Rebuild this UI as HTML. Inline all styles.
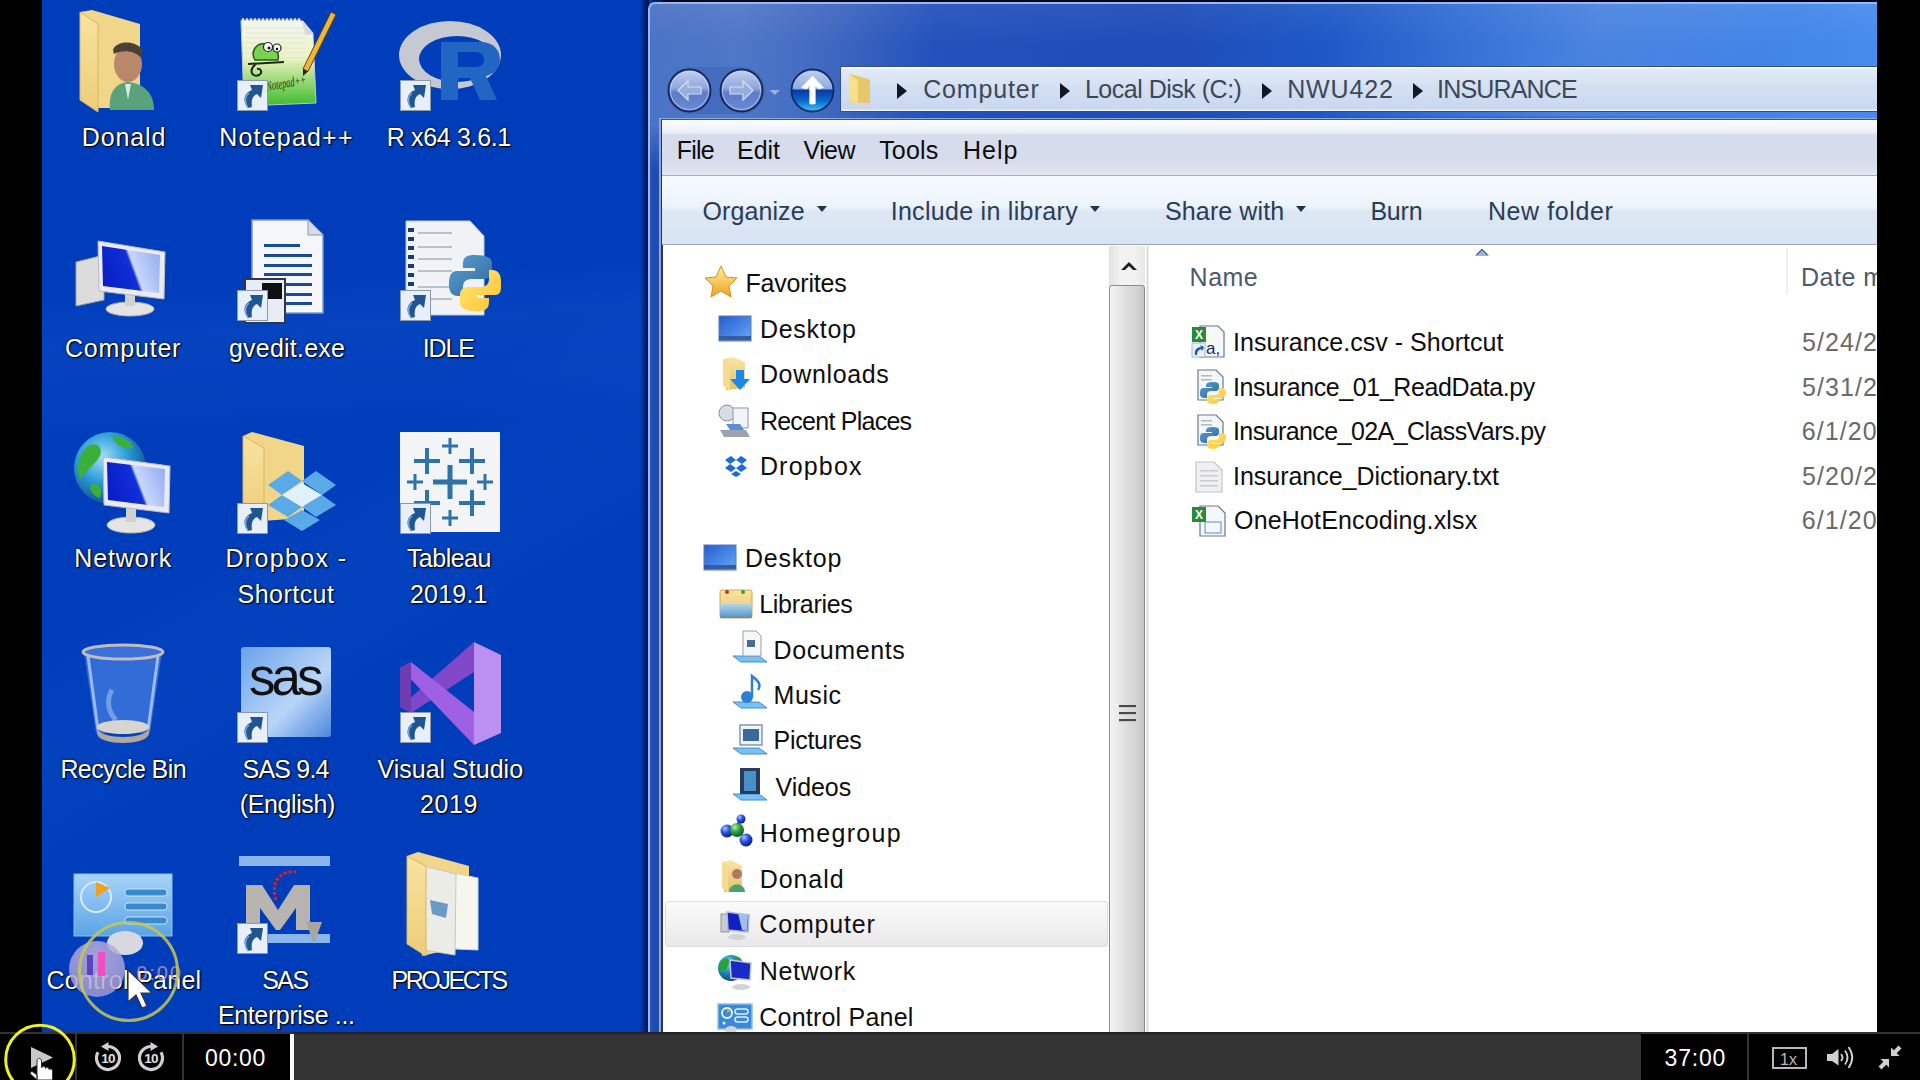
<!DOCTYPE html>
<html><head><meta charset="utf-8"><title>Explorer</title>
<style>
*{margin:0;padding:0;box-sizing:border-box}
html,body{width:1920px;height:1080px;overflow:hidden;background:#000}
body{position:relative;font-family:"Liberation Sans",sans-serif}
.a{position:absolute}
.t{position:absolute;line-height:0;white-space:nowrap}
.dl{color:#fff;text-shadow:1px 1px 1px #000,0 0 3px rgba(0,0,20,.9)}
</style></head><body>
<div class="a" style="left:42px;top:0;width:620px;height:1032px;background:#003dba;background-image:linear-gradient(176deg,rgba(80,140,255,0) 27%,rgba(80,140,255,.07) 32%,rgba(80,140,255,.05) 38%,rgba(80,140,255,0) 42%),linear-gradient(150deg,rgba(80,140,255,0) 45%,rgba(80,140,255,.06) 55%,rgba(80,140,255,0) 65%)"></div>
<svg class="a" style="left:0;top:0" width="1920" height="1080" viewBox="0 0 1920 1080">
<defs>
<linearGradient id="fold" x1="0" y1="0" x2="1" y2="1"><stop offset="0" stop-color="#fbe7a6"/><stop offset="1" stop-color="#e5c06a"/></linearGradient>
<linearGradient id="foldf" x1="0" y1="0" x2="0" y2="1"><stop offset="0" stop-color="#f8e3a0"/><stop offset="1" stop-color="#edcd7a"/></linearGradient>
<linearGradient id="scr" x1="0" y1=".3" x2="1" y2="0"><stop offset="0" stop-color="#0a20c8"/><stop offset=".42" stop-color="#1030d8"/><stop offset=".47" stop-color="#c8d8fc"/><stop offset="1" stop-color="#90a8f0"/></linearGradient>
<linearGradient id="sasg" x1="0" y1="0" x2="1" y2="1"><stop offset="0" stop-color="#6aa2ea"/><stop offset=".6" stop-color="#b9d6f8"/><stop offset="1" stop-color="#4c86de"/></linearGradient>
<linearGradient id="cpg" x1="0" y1="0" x2="0" y2="1"><stop offset="0" stop-color="#a8d4f8"/><stop offset="1" stop-color="#5aa4e6"/></linearGradient>
<radialGradient id="globe" cx=".4" cy=".35" r=".7"><stop offset="0" stop-color="#9fe0f8"/><stop offset=".5" stop-color="#2a9ad8"/><stop offset="1" stop-color="#0a4a8a"/></radialGradient>
<linearGradient id="bin" x1="0" y1="0" x2="1" y2="0"><stop offset="0" stop-color="#3a78d8"/><stop offset=".5" stop-color="#9cc4f4"/><stop offset="1" stop-color="#3a6ad0"/></linearGradient>
<linearGradient id="vsg" x1="0" y1="0" x2="1" y2="0"><stop offset="0" stop-color="#8a4ec8"/><stop offset="1" stop-color="#c39af0"/></linearGradient>
<linearGradient id="npg" x1="0" y1="0" x2="0" y2="1"><stop offset="0" stop-color="#f4f8f0"/><stop offset=".45" stop-color="#eef4c0"/><stop offset="1" stop-color="#3cbc2a"/></linearGradient>
<linearGradient id="pyb" x1="0" y1="0" x2="1" y2="1"><stop offset="0" stop-color="#5a9fd4"/><stop offset="1" stop-color="#306998"/></linearGradient>
<linearGradient id="pyy" x1="0" y1="0" x2="1" y2="1"><stop offset="0" stop-color="#ffe873"/><stop offset="1" stop-color="#ffc331"/></linearGradient>
</defs>
<path d="M80 12 L92 10 L140 24 L140 108 L96 108 Z" fill="#f1d68a"/>
<path d="M80 12 L98 24 L98 112 L80 100 Z" fill="url(#foldf)" stroke="#d8b560" stroke-width="1"/>
<path d="M110 110 C108 92 116 83 128 82 C140 83 154 90 154 110 Z" fill="#5aa27c"/>
<ellipse cx="128" cy="64" rx="14" ry="18" fill="#b9886a"/>
<path d="M113 50 C116 40 136 40 143 50 L141 58 C134 50 122 50 114 54 Z" fill="#4a4036"/>
<path d="M125 84 L128 100 L131 84 Z" fill="#d8e8e8"/>
<path d="M241 21 L243 18 L245 21 L247 18 L249 21 L251 18 L253 21 L255 18 L257 21 L259 18 L261 21 L263 18 L265 21 L267 18 L269 21 L271 18 L273 21 L275 18 L277 21 L279 18 L281 21 L283 18 L285 21 L287 18 L289 21 L291 18 L293 21 L295 18 L297 21 L299 18 L301 21 L303 21 L313 33 L316 103 L244 106 Z" fill="url(#npg)" stroke="#b8c8d8" stroke-width="1"/>
<path d="M302 21 L305 35 L313 34 Z" fill="#d8d8e0"/>
<path d="M245 28 L306 28" stroke="#dde4ec" stroke-width="1"/>
<path d="M245 33 L306 33" stroke="#dde4ec" stroke-width="1"/>
<path d="M245 38 L306 38" stroke="#dde4ec" stroke-width="1"/>
<path d="M245 43 L306 43" stroke="#dde4ec" stroke-width="1"/>
<path d="M245 48 L306 48" stroke="#dde4ec" stroke-width="1"/>
<path d="M245 53 L306 53" stroke="#dde4ec" stroke-width="1"/>
<path d="M245 58 L306 58" stroke="#dde4ec" stroke-width="1"/>
<path d="M303 69 L331 12 L336 14.5 L308 71.5 Z" fill="#f0b830" stroke="#604010" stroke-width="1"/>
<path d="M303 69 L308 71.5 L303 76 Z" fill="#302010"/>
<path d="M255 60 C250 52 256 42 266 44 C274 45 280 52 278 60 Z" fill="#7ad050" stroke="#2a5a1a" stroke-width="1.5"/>
<circle cx="268" cy="47" r="4.5" fill="#fff" stroke="#222" stroke-width="1.2"/><circle cx="277" cy="48" r="4" fill="#fff" stroke="#222" stroke-width="1.2"/><circle cx="269" cy="48" r="1.5" fill="#111"/><circle cx="277" cy="49" r="1.3" fill="#111"/>
<path d="M248 64 L284 62 M256 64 C248 70 252 78 259 75 C263 73 261 68 257 69" stroke="#1a2a10" stroke-width="2" fill="none"/>
<text x="267" y="91" font-family="Liberation Serif" font-style="italic" font-size="14" fill="#1a3a10" transform="rotate(-10 267 91)" textLength="40" lengthAdjust="spacingAndGlyphs">Notepad++</text>
<g transform="translate(237,80)"><rect x="0.5" y="0.5" width="30" height="30" fill="#e9eff8" stroke="#8a98b0" stroke-width="1"/><path d="M11 28 C5 21 7 13 15 10 L13 5 L26 5 L24 18 L20 14 C15 16 14 21 15 27 Z" fill="#1e5592"/><path d="M11 28 C7 22 8 16 12 13" stroke="#7aa8dc" stroke-width="1.5" fill="none"/></g>
<path fill-rule="evenodd" d="M399 55 A51 34 0 1 0 501 55 A51 34 0 1 0 399 55 Z M419 59 A38 23 0 1 1 495 59 A38 23 0 1 1 419 59 Z" fill="#c6c8d2"/>
<path fill-rule="evenodd" d="M441 42 L480 42 C494 42 500 50 500 60 C500 68 494 74 486 76 L497 100 L480 100 L470 78 L458 78 L458 100 L441 100 Z M458 52 L475 52 C482 52 484 56 484 60 C484 64 481 67 475 67 L458 67 Z" fill="#2266c4"/>
<g transform="translate(400,80)"><rect x="0.5" y="0.5" width="30" height="30" fill="#e9eff8" stroke="#8a98b0" stroke-width="1"/><path d="M11 28 C5 21 7 13 15 10 L13 5 L26 5 L24 18 L20 14 C15 16 14 21 15 27 Z" fill="#1e5592"/><path d="M11 28 C7 22 8 16 12 13" stroke="#7aa8dc" stroke-width="1.5" fill="none"/></g>
<path d="M76 262 L104 255 L104 300 L76 306 Z" fill="#dcdcdc" stroke="#a0a0a0" stroke-width="1"/>
<ellipse cx="130" cy="309" rx="24" ry="7" fill="#e4e4e4" stroke="#b0b0b0" stroke-width="1"/>
<rect x="125" y="292" width="10" height="14" fill="#d0d0d0"/>
<path d="M98 241 L165 252 L164 299 L99 291 Z" fill="#eaeaf0" stroke="#b8b8c8" stroke-width="1"/>
<path d="M102 246 L160 255 L159 293 L103 286 Z" fill="url(#scr)"/>
<path d="M252 220 L308 220 L323 235 L323 313 L252 313 Z" fill="#f4f6fa" stroke="#8898b0" stroke-width="1.5"/>
<path d="M308 220 L308 235 L323 235" fill="#d8dce8" stroke="#8898b0" stroke-width="1"/>
<rect x="264" y="244" width="36" height="3" fill="#1a4a9a"/>
<rect x="264" y="254" width="48" height="3" fill="#1a4a9a"/>
<rect x="264" y="264" width="48" height="3" fill="#1a4a9a"/>
<rect x="264" y="273" width="48" height="3" fill="#1a4a9a"/>
<rect x="264" y="283" width="48" height="3" fill="#1a4a9a"/>
<rect x="264" y="293" width="48" height="3" fill="#1a4a9a"/>
<rect x="264" y="302" width="48" height="3" fill="#1a4a9a"/>
<rect x="245" y="279" width="40" height="44" fill="#e8ecf4" stroke="#303848" stroke-width="2"/>
<rect x="262" y="283" width="20" height="16" fill="#101010"/>
<g transform="translate(237,290)"><rect x="0.5" y="0.5" width="30" height="30" fill="#e9eff8" stroke="#8a98b0" stroke-width="1"/><path d="M11 28 C5 21 7 13 15 10 L13 5 L26 5 L24 18 L20 14 C15 16 14 21 15 27 Z" fill="#1e5592"/><path d="M11 28 C7 22 8 16 12 13" stroke="#7aa8dc" stroke-width="1.5" fill="none"/></g>
<path d="M406 221 L470 221 L484 236 L484 315 L406 315 Z" fill="#f0f2f6" stroke="#c0c8d0" stroke-width="1"/>
<rect x="408" y="228" width="6" height="4" fill="#1a3a6a"/>
<rect x="408" y="237" width="6" height="4" fill="#1a3a6a"/>
<rect x="408" y="246" width="6" height="4" fill="#1a3a6a"/>
<rect x="408" y="255" width="6" height="4" fill="#1a3a6a"/>
<rect x="408" y="264" width="6" height="4" fill="#1a3a6a"/>
<rect x="408" y="273" width="6" height="4" fill="#1a3a6a"/>
<rect x="408" y="282" width="6" height="4" fill="#1a3a6a"/>
<rect x="408" y="291" width="6" height="4" fill="#1a3a6a"/>
<rect x="408" y="300" width="6" height="4" fill="#1a3a6a"/>
<rect x="408" y="309" width="6" height="4" fill="#1a3a6a"/>
<rect x="418" y="232" width="34" height="2" fill="#b8c0c8"/>
<rect x="418" y="246" width="34" height="2" fill="#b8c0c8"/>
<rect x="418" y="258" width="34" height="2" fill="#b8c0c8"/>
<rect x="418" y="270" width="34" height="2" fill="#b8c0c8"/>
<rect x="418" y="286" width="34" height="2" fill="#b8c0c8"/>
<rect x="418" y="298" width="34" height="2" fill="#b8c0c8"/>
<path d="M475 255 C462 255 463 261 463 268 L475 268 L475 271 L457 271 C450 271 449 278 449 284 C449 291 451 296 458 296 L463 296 L463 287 C463 281 467 279 472 279 L484 279 C489 279 492 276 492 271 L492 263 C492 258 487 255 475 255 Z" fill="url(#pyb)"/>
<path d="M477 311 C490 311 489 305 489 298 L477 298 L477 295 L495 295 C502 295 501 288 501 282 C501 275 499 270 492 270 L489 270 L489 279 C489 285 485 287 480 287 L468 287 C463 287 460 290 460 295 L460 303 C460 308 465 311 477 311 Z" fill="url(#pyy)"/>
<g transform="translate(400,290)"><rect x="0.5" y="0.5" width="30" height="30" fill="#e9eff8" stroke="#8a98b0" stroke-width="1"/><path d="M11 28 C5 21 7 13 15 10 L13 5 L26 5 L24 18 L20 14 C15 16 14 21 15 27 Z" fill="#1e5592"/><path d="M11 28 C7 22 8 16 12 13" stroke="#7aa8dc" stroke-width="1.5" fill="none"/></g>
<circle cx="110" cy="468" r="36" fill="url(#globe)"/>
<path d="M84 450 C92 440 104 444 100 456 C94 466 86 470 80 480 C76 470 78 458 84 450 Z M112 436 C122 436 130 440 134 448 C124 450 116 446 112 436 Z M90 486 C98 480 104 488 100 498 C94 496 90 492 90 486 Z" fill="#3cae3c"/>
<ellipse cx="131" cy="525" rx="24" ry="8" fill="#e4e4e4" stroke="#b0b0b0" stroke-width="1"/>
<rect x="126" y="508" width="10" height="14" fill="#d0d0d0"/>
<path d="M103 457 L170 466 L169 513 L104 505 Z" fill="#eaeaf0" stroke="#b8b8c8" stroke-width="1"/>
<path d="M107 462 L165 469 L164 507 L108 500 Z" fill="url(#scr)"/>
<path d="M243 436 L252 432 L304 446 L304 518 L262 521 Z" fill="#f1d68a"/>
<path d="M243 436 L264 448 L264 521 L243 508 Z" fill="url(#foldf)" stroke="#d8b560" stroke-width="1"/>
<path d="M268 485 L288 471 L302 481 L282 495 Z M302 481 L316 471 L336 485 L322 495 Z M268 505 L282 495 L302 507 L288 517 Z M322 495 L336 505 L316 517 L302 507 Z M284 520 L302 510 L320 520 L302 531 Z" fill="#5aaae8"/>
<path d="M282 495 L302 483 L322 495 L302 507 Z" fill="#e0f0fc"/>
<g transform="translate(237,503)"><rect x="0.5" y="0.5" width="30" height="30" fill="#e9eff8" stroke="#8a98b0" stroke-width="1"/><path d="M11 28 C5 21 7 13 15 10 L13 5 L26 5 L24 18 L20 14 C15 16 14 21 15 27 Z" fill="#1e5592"/><path d="M11 28 C7 22 8 16 12 13" stroke="#7aa8dc" stroke-width="1.5" fill="none"/></g>
<rect x="400" y="432" width="100" height="100" fill="#f2f4f6"/>
<rect x="433" y="479.5" width="34" height="5" fill="#2e72aa"/><rect x="447.5" y="465" width="5" height="34" fill="#2e72aa"/>
<rect x="414" y="459.0" width="26" height="4" fill="#2e72aa"/><rect x="425.0" y="448" width="4" height="26" fill="#2e72aa"/>
<rect x="459" y="459.0" width="26" height="4" fill="#2e72aa"/><rect x="470.0" y="448" width="4" height="26" fill="#2e72aa"/>
<rect x="414" y="501.0" width="26" height="4" fill="#2e72aa"/><rect x="425.0" y="490" width="4" height="26" fill="#2e72aa"/>
<rect x="459" y="501.0" width="26" height="4" fill="#2e72aa"/><rect x="470.0" y="490" width="4" height="26" fill="#2e72aa"/>
<rect x="442" y="444.5" width="16" height="3" fill="#2e72aa"/><rect x="448.5" y="438" width="3" height="16" fill="#2e72aa"/>
<rect x="442" y="516.5" width="16" height="3" fill="#2e72aa"/><rect x="448.5" y="510" width="3" height="16" fill="#2e72aa"/>
<rect x="407" y="480.5" width="16" height="3" fill="#2e72aa"/><rect x="413.5" y="474" width="3" height="16" fill="#2e72aa"/>
<rect x="477" y="480.5" width="16" height="3" fill="#2e72aa"/><rect x="483.5" y="474" width="3" height="16" fill="#2e72aa"/>
<g transform="translate(400,503)"><rect x="0.5" y="0.5" width="30" height="30" fill="#e9eff8" stroke="#8a98b0" stroke-width="1"/><path d="M11 28 C5 21 7 13 15 10 L13 5 L26 5 L24 18 L20 14 C15 16 14 21 15 27 Z" fill="#1e5592"/><path d="M11 28 C7 22 8 16 12 13" stroke="#7aa8dc" stroke-width="1.5" fill="none"/></g>
<path d="M84 652 L162 652 L150 733 L96 733 Z" fill="#5a90ec" opacity=".55"/>
<path d="M88 656 L98 730 M158 656 L148 730" stroke="#c8dcfc" stroke-width="3" opacity=".7"/>
<path d="M112 690 C106 700 108 712 116 720" stroke="#9cc0f4" stroke-width="5" fill="none" opacity=".6"/>
<ellipse cx="123" cy="652" rx="40" ry="7" fill="#3a70d8" stroke="#c0bcc0" stroke-width="3"/>
<ellipse cx="123" cy="727" rx="26" ry="7" fill="#d8d4d0"/>
<path d="M97 728 C100 740 146 740 149 728 L149 734 C146 746 100 746 97 734 Z" fill="#b0a8a0"/>
<rect x="241" y="647" width="90" height="90" rx="3" fill="url(#sasg)"/>
<text x="249" y="695" font-family="Liberation Sans" font-size="53" fill="#111" letter-spacing="-4">sas</text>
<g transform="translate(237,712)"><rect x="0.5" y="0.5" width="30" height="30" fill="#e9eff8" stroke="#8a98b0" stroke-width="1"/><path d="M11 28 C5 21 7 13 15 10 L13 5 L26 5 L24 18 L20 14 C15 16 14 21 15 27 Z" fill="#1e5592"/><path d="M11 28 C7 22 8 16 12 13" stroke="#7aa8dc" stroke-width="1.5" fill="none"/></g>
<path d="M400 707 L474 642 L474 672 L411 713 Z" fill="#8048c8"/>
<path d="M400 668 L411 662 L474 712 L474 745 Z" fill="#a060e4"/>
<path d="M400 668 L411 662 L411 713 L400 707 Z" fill="#6c3cb0"/>
<path d="M474 642 L501 655 L501 733 L474 745 Z" fill="#bc90f2"/>
<g transform="translate(400,712)"><rect x="0.5" y="0.5" width="30" height="30" fill="#e9eff8" stroke="#8a98b0" stroke-width="1"/><path d="M11 28 C5 21 7 13 15 10 L13 5 L26 5 L24 18 L20 14 C15 16 14 21 15 27 Z" fill="#1e5592"/><path d="M11 28 C7 22 8 16 12 13" stroke="#7aa8dc" stroke-width="1.5" fill="none"/></g>
<rect x="74" y="874" width="98" height="62" fill="url(#cpg)" stroke="#8ec0ee" stroke-width="1"/>
<circle cx="96" cy="897" r="15" fill="none" stroke="#d8ecfc" stroke-width="2"/>
<path d="M96 882 L110 888 L96 897 Z" fill="#f0a020"/>
<rect x="125" y="889" width="42" height="7" rx="3" fill="#3a8ad0" stroke="#c8e4fc" stroke-width="1"/>
<rect x="125" y="903" width="42" height="7" rx="3" fill="#3a8ad0" stroke="#c8e4fc" stroke-width="1"/>
<rect x="125" y="917" width="42" height="7" rx="3" fill="#3a8ad0" stroke="#c8e4fc" stroke-width="1"/>
<ellipse cx="125" cy="943" rx="18" ry="12" fill="#d8d8e0"/>
<rect x="239" y="856" width="91" height="10" fill="#8ab6ec"/>
<path d="M246 885 L262 885 L278 910 L294 885 L310 885 L310 930 L296 930 L296 908 L280 930 L276 930 L260 908 L260 930 L246 930 Z" fill="#b8b4b0"/>
<path d="M276 900 C270 880 282 870 296 872" fill="none" stroke="#e02020" stroke-width="3" stroke-dasharray="3 2"/>
<rect x="268" y="934" width="62" height="9" fill="#8ab6ec"/>
<path d="M306 922 L322 922 L314 944 Z" fill="#a8a4a0"/>
<g transform="translate(237,923)"><rect x="0.5" y="0.5" width="30" height="30" fill="#e9eff8" stroke="#8a98b0" stroke-width="1"/><path d="M11 28 C5 21 7 13 15 10 L13 5 L26 5 L24 18 L20 14 C15 16 14 21 15 27 Z" fill="#1e5592"/><path d="M11 28 C7 22 8 16 12 13" stroke="#7aa8dc" stroke-width="1.5" fill="none"/></g>
<path d="M407 856 L418 852 L469 866 L469 945 L422 956 Z" fill="#f1d68a"/>
<path d="M429 868 L478 878 L478 950 L432 948 Z" fill="#f6f6f0" stroke="#d0d0c8" stroke-width="1"/>
<path d="M424 866 L456 874 L455 955 L424 950 Z" fill="#ecece6" stroke="#c8c8c0" stroke-width="1"/>
<path d="M430 900 L448 904 L446 918 L432 914 Z" fill="#6a9ac8"/>
<path d="M407 856 L426 866 L426 956 L407 944 Z" fill="url(#foldf)" stroke="#d8b560" stroke-width="1"/>
</svg>
<div class="t dl" style="left:81.7px;top:136.8px;font-size:25px;letter-spacing:0.89px;color:#fff;">Donald</div>
<div class="t dl" style="left:219.2px;top:136.8px;font-size:25px;letter-spacing:1.20px;color:#fff;">Notepad++</div>
<div class="t dl" style="left:386.7px;top:136.8px;font-size:25px;letter-spacing:-0.33px;color:#fff;">R x64 3.6.1</div>
<div class="t dl" style="left:65.0px;top:347.6px;font-size:25px;letter-spacing:0.81px;color:#fff;">Computer</div>
<div class="t dl" style="left:229.0px;top:347.6px;font-size:25px;letter-spacing:0.22px;color:#fff;">gvedit.exe</div>
<div class="t dl" style="left:422.7px;top:347.6px;font-size:25px;letter-spacing:-1.15px;color:#fff;">IDLE</div>
<div class="t dl" style="left:74.2px;top:557.6px;font-size:25px;letter-spacing:0.89px;color:#fff;">Network</div>
<div class="t dl" style="left:225.4px;top:557.6px;font-size:25px;letter-spacing:1.36px;color:#fff;">Dropbox -</div>
<div class="t dl" style="left:237.6px;top:593.8px;font-size:25px;letter-spacing:0.46px;color:#fff;">Shortcut</div>
<div class="t dl" style="left:406.9px;top:557.6px;font-size:25px;letter-spacing:-0.52px;color:#fff;">Tableau</div>
<div class="t dl" style="left:410.0px;top:593.8px;font-size:25px;letter-spacing:0.20px;color:#fff;">2019.1</div>
<div class="t dl" style="left:60.4px;top:768.8px;font-size:25px;letter-spacing:-0.58px;color:#fff;">Recycle Bin</div>
<div class="t dl" style="left:242.6px;top:768.8px;font-size:25px;letter-spacing:-0.81px;color:#fff;">SAS 9.4</div>
<div class="t dl" style="left:239.7px;top:803.8px;font-size:25px;letter-spacing:-0.38px;color:#fff;">(English)</div>
<div class="t dl" style="left:377.4px;top:768.8px;font-size:25px;letter-spacing:0.02px;color:#fff;">Visual Studio</div>
<div class="t dl" style="left:420.0px;top:803.8px;font-size:25px;letter-spacing:0.61px;color:#fff;">2019</div>
<div class="t dl" style="left:46.4px;top:979.5px;font-size:25px;letter-spacing:0.27px;color:#fff;">Control Panel</div>
<div class="t dl" style="left:262.2px;top:979.5px;font-size:25px;letter-spacing:-1.52px;color:#fff;">SAS</div>
<div class="t dl" style="left:217.9px;top:1015.2px;font-size:25px;letter-spacing:-0.36px;color:#fff;">Enterprise ...</div>
<div class="t dl" style="left:391.4px;top:979.5px;font-size:25px;letter-spacing:-2.38px;color:#fff;">PROJECTS</div>
<div class="a" style="left:69px;top:941px;width:56px;height:56px;border-radius:50%;background:radial-gradient(circle at 50% 30%,rgba(190,180,225,.85),rgba(160,150,210,.8))"></div>
<div class="a" style="left:87px;top:955px;width:6px;height:20px;background:#6040c0"></div><div class="a" style="left:98px;top:952px;width:7px;height:24px;background:#f050c0"></div>
<div class="t " style="left:136.2px;top:973.1px;font-size:20px;letter-spacing:1.88px;color:rgba(200,150,190,.8);">0:00</div>
<div class="a" style="left:78px;top:921px;width:101px;height:101px;border-radius:50%;border:3px solid rgba(200,200,80,.85)"></div>
<svg class="a" style="left:124px;top:966px" width="32" height="46" viewBox="0 0 32 46"><path d="M4 4 L4 36 L12 29 L18 42 L23 40 L17 27 L28 27 Z" fill="#fff" stroke="#333" stroke-width="1.2"/></svg>
<div class="a" style="left:640px;top:0;width:9px;height:1032px;background:linear-gradient(90deg,rgba(0,10,60,0),rgba(0,12,60,.5) 50%,rgba(0,12,70,.95))"></div>
<div class="a" style="left:652px;top:0;width:1236px;height:4px;background:linear-gradient(180deg,rgba(0,8,50,.8),rgba(0,10,60,0))"></div>
<div class="a" style="left:648px;top:2px;width:1240px;height:1040px;border:2px solid #9ab8f0;border-radius:7px 7px 0 0;background:linear-gradient(180deg,rgba(255,255,255,.06),rgba(255,255,255,0) 40px),linear-gradient(93deg,#4a72c6 0%,#5078c8 7%,#4068c0 14%,#2452bc 22%,#1e4cb8 40%,#1e58c6 52%,#2a68d2 62%,#3878de 75%,#4286e8 88%,#4a90f0 100%)"></div>
<div class="a" style="left:650px;top:4px;width:1236px;height:112px;background:linear-gradient(110deg,rgba(255,255,255,0) 55%,rgba(255,255,255,.10) 75%,rgba(255,255,255,0) 90%)"></div>
<svg class="a" style="left:660px;top:60px" width="180" height="62" viewBox="660 60 180 62">
<defs>
<linearGradient id="nb" x1="0" y1="0" x2="0" y2="1"><stop offset="0" stop-color="#c4d2f0"/><stop offset=".45" stop-color="#8ea6dc"/><stop offset=".55" stop-color="#5c7cc8"/><stop offset="1" stop-color="#6a8ad4"/></linearGradient>
<linearGradient id="ub" x1="0" y1="0" x2="0" y2="1"><stop offset="0" stop-color="#c0d0f0"/><stop offset=".45" stop-color="#90acdf"/><stop offset=".5" stop-color="#0a3a9e"/><stop offset=".75" stop-color="#0a6ad0"/><stop offset="1" stop-color="#38c8fa"/></linearGradient>
</defs>
<rect x="667" y="67" width="98" height="47" rx="23.5" fill="#1a3a90" opacity=".2"/>
<circle cx="689.5" cy="90.5" r="21" fill="url(#nb)" stroke="#16285a" stroke-width="1.8"/>
<circle cx="689.5" cy="90.5" r="19" fill="none" stroke="#c8d6f4" stroke-width="1" opacity=".7"/>
<circle cx="741.5" cy="90.5" r="21" fill="url(#nb)" stroke="#16285a" stroke-width="1.8"/>
<circle cx="741.5" cy="90.5" r="19" fill="none" stroke="#c8d6f4" stroke-width="1" opacity=".7"/>
<path d="M678 90.5 L688 81 L688 87 L701 87 L701 94 L688 94 L688 100 Z" fill="#9cb0e0" stroke="#dce6f8" stroke-width="1.2" opacity=".9"/>
<path d="M753 90.5 L743 81 L743 87 L730 87 L730 94 L743 94 L743 100 Z" fill="#9cb0e0" stroke="#dce6f8" stroke-width="1.2" opacity=".9"/>
<path d="M769.5 90 L780 90 L774.7 95 Z" fill="#9ab0e0"/>
<circle cx="812.5" cy="90.5" r="21" fill="url(#ub)" stroke="#102a66" stroke-width="1.8"/>
<path d="M812.5 76 L823.5 87.5 L818.5 89 L815.2 85.5 L815.2 104 L809.8 104 L809.8 85.5 L806.5 89 L801.5 87.5 Z" fill="#fff" stroke="#e8f0ff" stroke-width=".8"/>
</svg>
<div class="a" style="left:840px;top:66px;width:1050px;height:46px;border:1px solid #30508a;border-radius:2px;background:linear-gradient(180deg,#e4ecf8 0%,#d4e0f2 45%,#c8d6ee 100%);box-shadow:inset 0 1.5px 0 #fff,inset 0 -1.5px 0 #eef4fc"></div>
<svg class="a" style="left:845px;top:70px" width="30" height="38" viewBox="845 70 30 38"><path d="M849 74 L862 77 L870 80 L870 103 L852 103 Z" fill="#e8c66a"/><path d="M849 74 L858 80 L858 105 L849 100 Z" fill="#f8e08a"/></svg>
<svg class="a" style="left:897px;top:82.7px" width="10" height="16" viewBox="0 0 10 16"><path d="M0 0 L10 8.0 L0 16 Z" fill="#101828"/></svg>
<svg class="a" style="left:1059.5px;top:82.7px" width="10.0" height="16" viewBox="0 0 10.0 16"><path d="M0 0 L10.0 8.0 L0 16 Z" fill="#101828"/></svg>
<svg class="a" style="left:1261.5px;top:82.7px" width="10.0" height="16" viewBox="0 0 10.0 16"><path d="M0 0 L10.0 8.0 L0 16 Z" fill="#101828"/></svg>
<svg class="a" style="left:1413px;top:82.7px" width="10" height="16" viewBox="0 0 10 16"><path d="M0 0 L10 8.0 L0 16 Z" fill="#101828"/></svg>
<div class="t " style="left:923.2px;top:88.9px;font-size:25px;letter-spacing:0.83px;color:#3c4858;">Computer</div>
<div class="t " style="left:1084.9px;top:88.9px;font-size:25px;letter-spacing:-0.49px;color:#3c4858;">Local Disk (C:)</div>
<div class="t " style="left:1287.2px;top:88.9px;font-size:25px;letter-spacing:0.86px;color:#3c4858;">NWU422</div>
<div class="t " style="left:1437.0px;top:88.9px;font-size:25px;letter-spacing:-0.81px;color:#3c4858;">INSURANCE</div>
<div class="a" style="left:650px;top:125px;width:10px;height:920px;background:linear-gradient(180deg,#4a72c6 0,rgba(74,114,198,0) 45px),linear-gradient(90deg,#2c52b4,#1a4cb0 50%,#2a4ea8)"></div>
<div class="a" style="left:659px;top:118px;width:1230px;height:920px;border-left:2px solid #90a4dc;border-top:1px solid #8eaae0"></div>
<div class="a" style="left:661px;top:119px;width:1230px;height:920px;border-left:2px solid #2a3260;border-top:1px solid #3a5488;background:#fff"></div>
<div class="a" style="left:662px;top:120px;width:1230px;height:56px;background:linear-gradient(180deg,#fafcfe 0px,#eef1f8 12px,#d6dcec 15px,#d6dcec 40px,#e2e6f1 55px);border-bottom:1px solid #a8b0c0"></div>
<div class="t " style="left:676.7px;top:150.0px;font-size:25px;letter-spacing:-0.81px;color:#0c0c0c;">File</div>
<div class="t " style="left:737.1px;top:150.0px;font-size:25px;letter-spacing:-0.08px;color:#0c0c0c;">Edit</div>
<div class="t " style="left:803.5px;top:150.0px;font-size:25px;letter-spacing:-0.58px;color:#0c0c0c;">View</div>
<div class="t " style="left:879.2px;top:150.0px;font-size:25px;letter-spacing:0.18px;color:#0c0c0c;">Tools</div>
<div class="t " style="left:962.9px;top:150.0px;font-size:25px;letter-spacing:1.03px;color:#0c0c0c;">Help</div>
<div class="a" style="left:662px;top:176px;width:1230px;height:69px;background:linear-gradient(180deg,#f6fafe 0px,#ecf4fb 30px,#dde7f4 36px,#d9e4f3 68px);border-bottom:1.5px solid #9aa8bc"></div>
<div class="t " style="left:702.6px;top:211.1px;font-size:25px;letter-spacing:0.08px;color:#2a3c56;">Organize</div>
<div class="t " style="left:890.7px;top:211.1px;font-size:25px;letter-spacing:0.29px;color:#2a3c56;">Include in library</div>
<div class="t " style="left:1165.1px;top:211.1px;font-size:25px;letter-spacing:0.10px;color:#2a3c56;">Share with</div>
<div class="t " style="left:1370.4px;top:211.1px;font-size:25px;letter-spacing:-0.21px;color:#2a3c56;">Burn</div>
<div class="t " style="left:1487.9px;top:211.1px;font-size:25px;letter-spacing:0.61px;color:#2a3c56;">New folder</div>
<svg class="a" style="left:817px;top:206px" width="10" height="6" viewBox="0 0 10 6"><path d="M0 0 L10 0 L5.0 6 Z" fill="#1e3452"/></svg>
<svg class="a" style="left:1090px;top:206px" width="10" height="6" viewBox="0 0 10 6"><path d="M0 0 L10 0 L5.0 6 Z" fill="#1e3452"/></svg>
<svg class="a" style="left:1296px;top:206px" width="10" height="6" viewBox="0 0 10 6"><path d="M0 0 L10 0 L5.0 6 Z" fill="#1e3452"/></svg>
<div class="a" style="left:1109px;top:246px;width:36px;height:800px;background:linear-gradient(90deg,#e4e4e4,#f2f2f2 30%,#f2f2f2 70%,#e8e8e8);border-left:1px solid #e0e0e0"></div>
<svg class="a" style="left:1120px;top:259px" width="18" height="12" viewBox="0 0 18 12"><path d="M1 11 L9 3 L17 11 L13 11 L9 7 L5 11 Z" fill="#202020"/></svg>
<div class="a" style="left:1109px;top:285px;width:36px;height:760px;border:1.5px solid #8c8c8c;border-radius:3px;background:linear-gradient(90deg,#f4f4f4 0%,#ececec 20%,#dcdcdc 50%,#d4d4d4 80%,#c4c4c4 100%)"></div>
<div class="a" style="left:1119px;top:705px;width:17px;height:3px;background:#4a4a4a;border-bottom:1px solid #c8c8c8"></div>
<div class="a" style="left:1119px;top:712px;width:17px;height:3px;background:#4a4a4a;border-bottom:1px solid #c8c8c8"></div>
<div class="a" style="left:1119px;top:719px;width:17px;height:3px;background:#4a4a4a;border-bottom:1px solid #c8c8c8"></div>
<div class="a" style="left:1146px;top:246px;width:3px;height:800px;background:linear-gradient(90deg,#f4f4f4,#dcdcdc,#f4f4f4)"></div>
<div class="a" style="left:665px;top:901px;width:443px;height:46px;border:1.5px solid #dcdcdc;border-radius:3px;background:linear-gradient(180deg,#fbfbfb,#f2f2f2 50%,#e8e8e8)"></div>
<div class="t " style="left:745.4px;top:283.3px;font-size:25px;letter-spacing:-0.17px;color:#0e0e0e;">Favorites</div>
<div class="t " style="left:759.9px;top:328.8px;font-size:25px;letter-spacing:0.73px;color:#0e0e0e;">Desktop</div>
<div class="t " style="left:759.9px;top:374.4px;font-size:25px;letter-spacing:0.66px;color:#0e0e0e;">Downloads</div>
<div class="t " style="left:759.9px;top:420.7px;font-size:25px;letter-spacing:-0.75px;color:#0e0e0e;">Recent Places</div>
<div class="t " style="left:759.9px;top:466.3px;font-size:25px;letter-spacing:1.18px;color:#0e0e0e;">Dropbox</div>
<div class="t " style="left:744.9px;top:557.6px;font-size:25px;letter-spacing:0.80px;color:#0e0e0e;">Desktop</div>
<div class="t " style="left:759.2px;top:604.3px;font-size:25px;letter-spacing:-0.28px;color:#0e0e0e;">Libraries</div>
<div class="t " style="left:773.5px;top:649.6px;font-size:25px;letter-spacing:0.60px;color:#0e0e0e;">Documents</div>
<div class="t " style="left:773.5px;top:695.0px;font-size:25px;letter-spacing:0.56px;color:#0e0e0e;">Music</div>
<div class="t " style="left:773.5px;top:740.3px;font-size:25px;letter-spacing:-0.28px;color:#0e0e0e;">Pictures</div>
<div class="t " style="left:775.5px;top:787.0px;font-size:25px;letter-spacing:-0.07px;color:#0e0e0e;">Videos</div>
<div class="t " style="left:759.7px;top:833.2px;font-size:25px;letter-spacing:1.28px;color:#0e0e0e;">Homegroup</div>
<div class="t " style="left:759.7px;top:878.7px;font-size:25px;letter-spacing:0.93px;color:#0e0e0e;">Donald</div>
<div class="t " style="left:759.3px;top:924.3px;font-size:25px;letter-spacing:0.82px;color:#0e0e0e;">Computer</div>
<div class="t " style="left:759.7px;top:971.0px;font-size:25px;letter-spacing:0.64px;color:#0e0e0e;">Network</div>
<div class="t " style="left:759.3px;top:1016.5px;font-size:25px;letter-spacing:0.21px;color:#0e0e0e;">Control Panel</div>
<div class="t " style="left:1189.6px;top:277.1px;font-size:25px;letter-spacing:0.49px;color:#4c5a6c;">Name</div>
<svg class="a" style="left:1473px;top:247px" width="18" height="10" viewBox="0 0 18 10"><path d="M2 8.5 L9 1.5 L16 8.5 Z" fill="#4a6a90"/><path d="M4 8.5 L9 3.5 L14 8.5 Z" fill="#9ab8dc"/></svg>
<div class="a" style="left:1786px;top:248px;width:2px;height:46px;background:#efefef"></div>
<div class="t " style="left:1800.9px;top:277.3px;font-size:25px;letter-spacing:0.53px;color:#4c5a6c;">Date modified</div>
<div class="t " style="left:1233.0px;top:342.3px;font-size:25px;letter-spacing:0.04px;color:#0e0e0e;">Insurance.csv - Shortcut</div>
<div class="t" style="left:1802.0px;top:342.3px;font-size:25px;letter-spacing:1.1px;color:#6a6a6a">5/24/2019 1:23 PM</div>
<div class="t " style="left:1233.0px;top:386.8px;font-size:25px;letter-spacing:-0.39px;color:#0e0e0e;">Insurance_01_ReadData.py</div>
<div class="t" style="left:1802.0px;top:386.8px;font-size:25px;letter-spacing:1.1px;color:#6a6a6a">5/31/2019 2:10 PM</div>
<div class="t " style="left:1233.0px;top:431.3px;font-size:25px;letter-spacing:-0.58px;color:#0e0e0e;">Insurance_02A_ClassVars.py</div>
<div class="t" style="left:1801.7px;top:431.3px;font-size:25px;letter-spacing:1.1px;color:#6a6a6a">6/1/2019 10:02 AM</div>
<div class="t " style="left:1233.0px;top:475.7px;font-size:25px;letter-spacing:-0.02px;color:#0e0e0e;">Insurance_Dictionary.txt</div>
<div class="t" style="left:1802.0px;top:475.7px;font-size:25px;letter-spacing:1.1px;color:#6a6a6a">5/20/2019 9:41 AM</div>
<div class="t " style="left:1234.1px;top:520.2px;font-size:25px;letter-spacing:0.15px;color:#0e0e0e;">OneHotEncoding.xlsx</div>
<div class="t" style="left:1801.7px;top:520.2px;font-size:25px;letter-spacing:1.1px;color:#6a6a6a">6/1/2019 9:12 AM</div>
<div class="a" style="left:1877px;top:0;width:43px;height:1032px;background:#000"></div>
<svg class="a" style="left:660px;top:240px" width="940" height="800" viewBox="660 240 940 800">
<defs>
<linearGradient id="star" x1="0" y1="0" x2="0" y2="1"><stop offset="0" stop-color="#fff0a0"/><stop offset="1" stop-color="#f0a020"/></linearGradient>
<linearGradient id="dsk" x1="0" y1="0" x2="1" y2="1"><stop offset="0" stop-color="#2a5ad0"/><stop offset=".6" stop-color="#4a8ae8"/><stop offset="1" stop-color="#6aaaf0"/></linearGradient>
<linearGradient id="lib" x1="0" y1="0" x2="0" y2="1"><stop offset="0" stop-color="#a8d8f8"/><stop offset="1" stop-color="#3a8ad8"/></linearGradient>
<linearGradient id="sfold" x1="0" y1="0" x2="0" y2="1"><stop offset="0" stop-color="#fbe6a0"/><stop offset="1" stop-color="#e4c070"/></linearGradient>
<radialGradient id="ball" cx=".35" cy=".3" r=".7"><stop offset="0" stop-color="#a8c0ff"/><stop offset=".5" stop-color="#2a50e0"/><stop offset="1" stop-color="#0a208a"/></radialGradient><radialGradient id="gball" cx=".35" cy=".3" r=".7"><stop offset="0" stop-color="#b0f0a0"/><stop offset=".5" stop-color="#30a040"/><stop offset="1" stop-color="#106020"/></radialGradient><radialGradient id="glb2" cx=".35" cy=".3" r=".75"><stop offset="0" stop-color="#80e0f0"/><stop offset=".5" stop-color="#1a88b8"/><stop offset="1" stop-color="#0a4a70"/></radialGradient>
<linearGradient id="pyb2" x1="0" y1="0" x2="1" y2="1"><stop offset="0" stop-color="#5a9fd4"/><stop offset="1" stop-color="#306998"/></linearGradient>
<linearGradient id="pyy2" x1="0" y1="0" x2="1" y2="1"><stop offset="0" stop-color="#ffe873"/><stop offset="1" stop-color="#ffc331"/></linearGradient>
</defs>
<path d="M721 266 L726 277 L737 278 L729 286 L731 297 L721 291 L711 297 L713 286 L705 278 L716 277 Z" fill="url(#star)" stroke="#d89020" stroke-width="1"/>
<rect x="719" y="316" width="32" height="25" fill="url(#dsk)" stroke="#5a7ab0" stroke-width="1"/>
<rect x="719" y="336" width="32" height="4" fill="#3a5aa0"/>
<rect x="704" y="545" width="32" height="25" fill="url(#dsk)" stroke="#5a7ab0" stroke-width="1"/>
<rect x="704" y="565" width="32" height="4" fill="#3a5aa0"/>
<path d="M723 359 L733 357 L745 362 L745 388 L726 390 Z" fill="url(#sfold)"/>
<path d="M723 359 L730 363 L730 390 L723 386 Z" fill="#f6dc90"/>
<path d="M736 370 L744 370 L744 379 L750 379 L740 390 L730 379 L736 379 Z" fill="#1a8ae8"/>
<circle cx="727" cy="413" r="8" fill="#d8dce4" stroke="#8890a0" stroke-width="1"/>
<rect x="733" y="408" width="15" height="20" fill="#f0f4f8" stroke="#8898b0" stroke-width="1"/>
<path d="M720 430 L746 430 L750 437 L724 437 Z" fill="#9aa4b0"/>
<path d="M726 424 L740 424 L744 430 L730 430 Z" fill="#5a90d0"/>
<path d="M725 460 L731 456 L736 460 L730 464 Z M736 460 L741 456 L747 460 L742 464 Z M725 468 L730 464 L736 468 L731 472 Z M742 464 L747 468 L741 472 L736 468 Z M731 474 L736 471 L741 474 L736 477 Z" fill="#1a6ae0"/>
<rect x="720" y="590" width="32" height="28" rx="2" fill="url(#sfold)" stroke="#c8a850" stroke-width="1"/>
<path d="M720 604 L752 604 L752 618 L720 618 Z" fill="url(#lib)" opacity=".85"/>
<circle cx="727" cy="592" r="2" fill="#c03020"/><circle cx="743" cy="592" r="2" fill="#30a030"/>
<path d="M733 656 L759 656 L767 662 L741 662 Z" fill="#7ac0f0" stroke="#3a90d8" stroke-width="1"/>
<path d="M743 631 L756 631 L761 636 L761 656 L743 656 Z" fill="#f4f6f8" stroke="#9aa0b0" stroke-width="1"/>
<rect x="747" y="640" width="8" height="7" fill="#4a6a9a"/>
<path d="M733 702 L759 702 L767 708 L741 708 Z" fill="#7ac0f0" stroke="#3a90d8" stroke-width="1"/>
<circle cx="747" cy="697" r="6" fill="#2a80d8"/><path d="M752 697 L752 676 C757 680 762 684 758 690" stroke="#2a80d8" stroke-width="2.5" fill="none"/>
<path d="M733 748 L759 748 L767 754 L741 754 Z" fill="#7ac0f0" stroke="#3a90d8" stroke-width="1"/>
<rect x="740" y="725" width="22" height="20" fill="#f0f4f8" stroke="#8898b0" stroke-width="1.5"/><rect x="743" y="729" width="16" height="12" fill="#3a6a9a"/>
<path d="M733 794 L759 794 L767 800 L741 800 Z" fill="#7ac0f0" stroke="#3a90d8" stroke-width="1"/>
<rect x="740" y="768" width="20" height="26" fill="#2a3a5a"/><rect x="744" y="771" width="12" height="20" fill="#4a90c8"/>
<path d="M727 831 L737 830 L742 819 M737 830 L747 840" stroke="#8090a0" stroke-width="2"/><circle cx="727" cy="831" r="6.5" fill="url(#ball)"/><circle cx="741" cy="819" r="4.5" fill="url(#ball)"/><circle cx="737" cy="830" r="7" fill="url(#gball)"/><circle cx="746" cy="840" r="6.5" fill="url(#ball)"/>
<path d="M722 862 L731 860 L742 866 L742 890 L724 892 Z" fill="url(#sfold)"/>
<path d="M722 862 L728 866 L728 892 L722 888 Z" fill="#f4dc90"/>
<circle cx="737" cy="874" r="5" fill="#b07860"/><path d="M729 892 C729 882 745 882 745 892 Z" fill="#4aa070"/>
<rect x="721" y="914" width="8" height="18" fill="#c8ccd0" stroke="#909498" stroke-width="1"/>
<path d="M727 912 L749 915 L748 932 L728 930 Z" fill="#1020c0" stroke="#b0b8d8" stroke-width="1.5"/>
<path d="M738 913 L748 915 L747 931 L742 930 Z" fill="#a0c0f0"/>
<ellipse cx="737" cy="937" rx="9" ry="3" fill="#d0d4d8"/>
<circle cx="731" cy="968" r="13" fill="url(#glb2)"/><path d="M720 962 C726 955 733 958 727 968 C724 972 720 974 719 970 Z M734 956 C740 956 743 960 742 963 C738 962 735 959 734 956 Z" fill="#2aa040"/>
<path d="M730 960 L751 963 L750 980 L731 978 Z" fill="#1a2ac8" stroke="#c0c8e0" stroke-width="1.5"/>
<ellipse cx="741" cy="987" rx="9" ry="3" fill="#d0d4d8"/>
<rect x="718" y="1004" width="34" height="25" fill="#3a8ad8" stroke="#8ac0f0" stroke-width="1.5"/>
<circle cx="727" cy="1013" r="5" fill="none" stroke="#f0f8ff" stroke-width="1.8"/><path d="M727 1008 L731 1011 L727 1013 Z" fill="#f0a020"/><rect x="735" y="1009" width="13" height="5" rx="2.5" fill="none" stroke="#e0f0ff" stroke-width="1.5"/><rect x="735" y="1017" width="13" height="5" rx="2.5" fill="none" stroke="#e0f0ff" stroke-width="1.5"/><circle cx="724" cy="1023" r="1.5" fill="#e0f0ff"/><ellipse cx="731" cy="1030" rx="6" ry="4" fill="#d0d4dc"/>
<path d="M1200 326 L1218 326 L1224 332 L1224 357 L1200 357 Z" fill="#f8f8f8" stroke="#6a7890" stroke-width="1.2"/>
<rect x="1192" y="327" width="14" height="15" fill="#2a8a3a"/><text x="1195" y="339" font-family="Liberation Sans" font-weight="bold" font-size="12" fill="#fff">X</text>
<text x="1206" y="354" font-family="Liberation Sans" font-size="17" fill="#1a2a5a">a,</text>
<rect x="1192" y="343" width="13" height="14" fill="#e8f0fa" stroke="#9ab" stroke-width=".8"/><path d="M1195 355 C1194 350 1197 347 1201 347 L1200 345 L1204 347 L1202 351 L1201 349 C1198 350 1197 352 1197 355 Z" fill="#1f5a9e"/>
<path d="M1198 370 L1216 370 L1223 377 L1223 400 L1198 400 Z" fill="#f4f6f8" stroke="#6a7890" stroke-width="1.2"/><rect x="1201" y="375" width="11" height="1.5" fill="#b0b8c0"/><rect x="1201" y="379" width="11" height="1.5" fill="#b0b8c0"/><path d="M1212 382 C1206 382 1206 385 1206 387 L1212 387 L1212 388 L1203 388 C1200 388 1200 392 1200 394 C1200 397 1202 398 1205 398 L1207 398 L1207 394 C1207 392 1209 391 1211 391 L1216 391 C1218 391 1219 389 1219 387 L1219 385 C1219 383 1217 382 1212 382 Z" fill="url(#pyb2)"/><path d="M1213 404 C1219 404 1219 401 1219 399 L1213 399 L1213 398 L1222 398 C1225 398 1226 394 1226 392 C1226 389 1224 388 1221 388 L1219 388 L1219 392 C1219 394 1217 395 1215 395 L1210 395 C1208 395 1207 397 1207 399 L1207 401 C1207 403 1209 404 1213 404 Z" fill="url(#pyy2)"/>
<path d="M1198 415 L1216 415 L1223 422 L1223 445 L1198 445 Z" fill="#f4f6f8" stroke="#6a7890" stroke-width="1.2"/><rect x="1201" y="420" width="11" height="1.5" fill="#b0b8c0"/><rect x="1201" y="424" width="11" height="1.5" fill="#b0b8c0"/><path d="M1212 427 C1206 427 1206 430 1206 432 L1212 432 L1212 433 L1203 433 C1200 433 1200 437 1200 439 C1200 442 1202 443 1205 443 L1207 443 L1207 439 C1207 437 1209 436 1211 436 L1216 436 C1218 436 1219 434 1219 432 L1219 430 C1219 428 1217 427 1212 427 Z" fill="url(#pyb2)"/><path d="M1213 449 C1219 449 1219 446 1219 444 L1213 444 L1213 443 L1222 443 C1225 443 1226 439 1226 437 C1226 434 1224 433 1221 433 L1219 433 L1219 437 C1219 439 1217 440 1215 440 L1210 440 C1208 440 1207 442 1207 444 L1207 446 C1207 448 1209 449 1213 449 Z" fill="url(#pyy2)"/>
<path d="M1196 462 L1214 462 L1222 470 L1222 492 L1196 492 Z" fill="#f0f0f0" stroke="#c0c4c8" stroke-width="1.2"/>
<rect x="1200" y="470" width="18" height="1.5" fill="#c8ccd0"/>
<rect x="1200" y="475" width="18" height="1.5" fill="#c8ccd0"/>
<rect x="1200" y="480" width="18" height="1.5" fill="#c8ccd0"/>
<rect x="1200" y="485" width="18" height="1.5" fill="#c8ccd0"/>
<path d="M1200 506 L1218 506 L1225 513 L1225 536 L1200 536 Z" fill="#f4f8fc" stroke="#6a7890" stroke-width="1.2"/>
<rect x="1192" y="507" width="14" height="15" fill="#2a8a3a"/><text x="1195" y="519" font-family="Liberation Sans" font-weight="bold" font-size="12" fill="#fff">X</text>
<rect x="1205" y="522" width="16" height="11" fill="none" stroke="#5a8ac0" stroke-width="1"/>
</svg>
<div class="a" style="left:0;top:1032px;width:1920px;height:48px;background:#333"></div>
<div class="a" style="left:294px;top:1032px;width:1347px;height:2px;background:#242424"></div>
<div class="a" style="left:0;top:1034px;width:75px;height:46px;background:#000"></div>
<div class="a" style="left:77px;top:1034px;width:105px;height:46px;background:#000"></div>
<div class="a" style="left:184px;top:1034px;width:106px;height:46px;background:#000"></div>
<div class="a" style="left:290px;top:1034px;width:4px;height:46px;background:#fff"></div>
<div class="a" style="left:1641px;top:1034px;width:106px;height:46px;background:#000"></div>
<div class="a" style="left:1749px;top:1034px;width:171px;height:46px;background:#000"></div>
<div class="t " style="left:205.0px;top:1057.5px;font-size:23px;letter-spacing:0.71px;color:#fff;">00:00</div>
<div class="t " style="left:1664.6px;top:1057.8px;font-size:23px;letter-spacing:0.78px;color:#fff;">37:00</div>
<svg class="a" style="left:0;top:1020px" width="300" height="60" viewBox="0 1020 300 60">
<path d="M31 1047 L53 1057.5 L31 1068 Z" fill="#c8c8c8"/>
<path d="M37 1080 L37 1061 C37 1057.5 41.5 1057.5 41.5 1061 L41.5 1068 C42 1066 45.5 1066 45.5 1068.5 C46 1067 49 1067 49 1069.5 C49.5 1068.5 52.5 1068.5 52.5 1071 L52.5 1080 Z M37 1080 L31 1074.5 C29.5 1073 31 1071 33 1072 L37 1075 Z" fill="#fff" stroke="#333" stroke-width="1"/>
<circle cx="40" cy="1059.5" r="34.3" fill="none" stroke="#eef020" stroke-width="3"/>
<path d="M108 1046.5 A11.5 11.5 0 1 1 98.04 1052.25" fill="none" stroke="#d0d0d0" stroke-width="3.2"/>
<path d="M101 1046.5 L108.5 1042 L108.5 1051 Z" fill="#d0d0d0"/>
<text x="108" y="1063" text-anchor="middle" font-family="Liberation Sans" font-weight="bold" font-size="13.5" fill="#e0e0e0" letter-spacing="-0.8">10</text>
<path d="M151 1046.5 A11.5 11.5 0 1 0 160.96 1052.25" fill="none" stroke="#d0d0d0" stroke-width="3.2"/>
<path d="M158 1046.5 L150.5 1042 L150.5 1051 Z" fill="#d0d0d0"/>
<text x="151" y="1063" text-anchor="middle" font-family="Liberation Sans" font-weight="bold" font-size="13.5" fill="#e0e0e0" letter-spacing="-0.8">10</text>
</svg>
<svg class="a" style="left:1760px;top:1036px" width="160" height="44" viewBox="1760 1036 160 44">
<rect x="1773" y="1048" width="33" height="20" fill="none" stroke="#b8b8b8" stroke-width="2"/>
<text x="1780" y="1064.5" font-family="Liberation Sans" font-size="16" fill="#b8b8b8">1x</text>
<path d="M1827 1054 L1832 1054 L1838.5 1049 L1838.5 1065.5 L1832 1061 L1827 1061 Z" fill="#d0d0d0"/>
<path d="M1841 1054 Q1844 1057.5 1841 1061" fill="none" stroke="#d0d0d0" stroke-width="1.8"/>
<path d="M1845 1050.5 Q1850 1057.5 1845 1064.5" fill="none" stroke="#d0d0d0" stroke-width="1.8"/>
<path d="M1848.5 1047 Q1856 1057.5 1848.5 1068" fill="none" stroke="#d0d0d0" stroke-width="1.8"/>
<path d="M1891 1047.5 L1891 1056 L1899.5 1056 Z" fill="#d0d0d0"/><path d="M1893 1054 L1900 1047" stroke="#d0d0d0" stroke-width="4"/>
<path d="M1880.5 1059 L1889 1059 L1889 1067.5 Z" fill="#d0d0d0"/><path d="M1887 1061 L1880 1068" stroke="#d0d0d0" stroke-width="4"/>
</svg>
</body></html>
